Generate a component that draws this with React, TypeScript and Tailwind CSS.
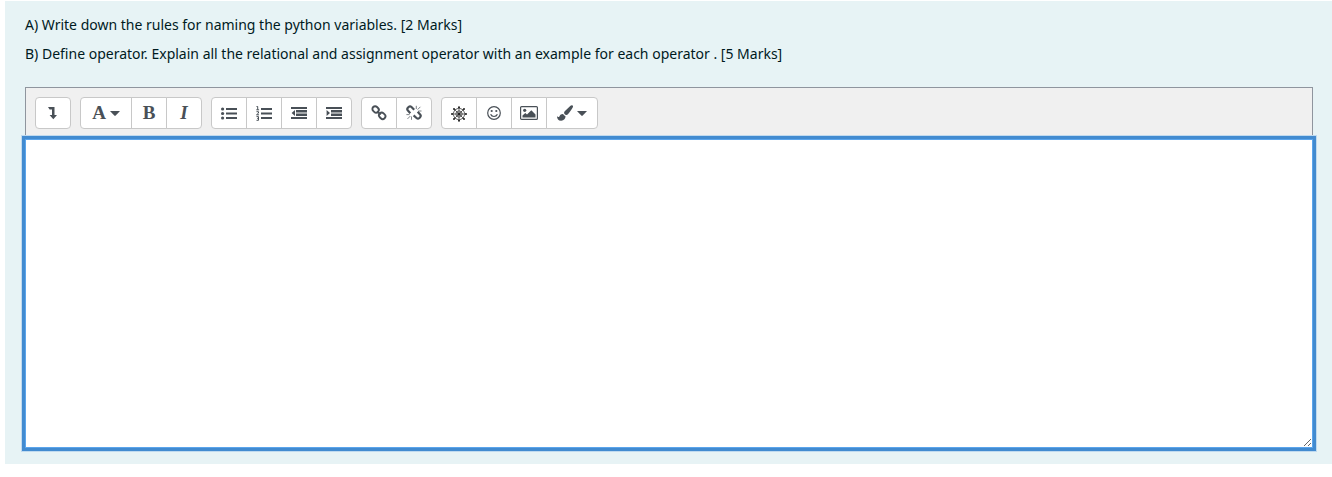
import React, { useState } from 'react';

type IconProps = { children: React.ReactNode; className?: string };

const Icon = ({ children, className = 'size-4' }: IconProps) => (
    <svg viewBox="0 0 16 16" className={`${className} shrink-0`} fill="currentColor" aria-hidden="true">
        {children}
    </svg>
);

const Caret = () => (
    <svg viewBox="0 0 10 5" className="w-[10px] h-[5px] shrink-0" fill="currentColor" aria-hidden="true">
        <path d="M0 0h10L5.500 4.800h-1z" />
    </svg>
);

const ToggleIcon = () => (
    <Icon>
        <path d="M3 2h6.500v8H12l-3.700 4.300L4.600 10H7V4.500H4.600z" />
    </Icon>
);

const BulletsIcon = () => (
    <Icon>
        <circle cx="1.600" cy="4" r="1.600" />
        <circle cx="1.600" cy="8.500" r="1.600" />
        <circle cx="1.600" cy="13" r="1.600" />
        <path d="M5 3h11.500v2H5zM5 7.500h11.500v2H5zM5 12h11.500v2H5z" />
    </Icon>
);

const NumbersIcon = () => (
    <Icon>
        <path d="M5 3h11.500v2H5zM5 7.500h11.500v2H5zM5 12h11.500v2H5z" />
        <path
            d="M.5 1.500h1.200v3.300M.3 4.800h2.800M.5 6.700h2v1.400l-2 1.700h2.500M.5 11.600h2v3.700h-2M1.200 13.400h1.200"
            fill="none"
            stroke="currentColor"
            strokeWidth="1"
        />
    </Icon>
);

const OutdentIcon = () => (
    <Icon>
        <path d="M0 2h16v2H0zM5 5h11v2.500H5zM5 8.500h11V11H5zM0 12h16v2H0zM4 5v6L.6 8z" />
    </Icon>
);

const IndentIcon = () => (
    <Icon>
        <path d="M0 2h16v2H0zM5 5h11v2.500H5zM5 8.500h11V11H5zM0 12h16v2H0zM.6 5v6L4 8z" />
    </Icon>
);

const LinkIcon = () => (
    <Icon>
        <g fill="none" stroke="currentColor" strokeWidth="1.900">
            <rect x="1.200" y="1.700" width="6.800" height="5.400" rx="2.700" transform="rotate(45 4.600 4.400)" />
            <rect x="7.800" y="8.100" width="6.800" height="5.400" rx="2.700" transform="rotate(45 11.200 10.800)" />
            <path d="M5.800 6.600l4.200 2.600" />
        </g>
    </Icon>
);

const UnlinkIcon = () => (
    <Icon>
        <g fill="none" stroke="currentColor" strokeWidth="2.200">
            <path d="M4.300 8.200L1.900 5.600a2.200 2.200 0 0 1 0-2.900l.7-.7a2.200 2.200 0 0 1 2.900 0l2.700 2.800" />
            <path d="M11.700 6.800l2.400 2.600a2.200 2.200 0 0 1 0 2.900l-.7.7a2.200 2.200 0 0 1-2.900 0L7.600 10.400" />
        </g>
        <path
            d="M10.300 4V.8M11.600 4.600l2.800-2.800M12.300 6h3.200M5.500 11.500v3.300M4.400 11l-2.900 2.900M3.600 9.600H.4"
            fill="none"
            stroke="currentColor"
            strokeWidth="0.700"
        />
    </Icon>
);

const WebIcon = () => (
    <Icon className="size-4 mt-[2px] text-[#222]">
        <g fill="none" stroke="currentColor" strokeWidth="0.700">
            <path d="M8 1v14M1 8h14M3 3l10 10M13 3L3 13" />
            <path d="M8 2l4.200 1.800L14 8l-1.800 4.200L8 14l-4.200-1.800L2 8l1.800-4.200z" />
            <path d="M8 4.800l2.300.9L11.200 8l-.9 2.300-2.300.9-2.300-.9L4.800 8l.9-2.300z" />
        </g>
        <circle cx="8" cy="8" r="1.600" />
        <circle cx="8" cy="1.200" r="1" />
        <circle cx="8" cy="14.800" r="1" />
        <circle cx="1" cy="8" r="1" />
        <circle cx="15" cy="8" r="1" />
        <circle cx="3" cy="3" r="1" />
        <circle cx="13" cy="3" r="1" />
        <circle cx="3" cy="13" r="1" />
        <circle cx="13" cy="13" r="1" />
    </Icon>
);

const SmileIcon = () => (
    <Icon>
        <circle cx="8" cy="8" r="6.300" fill="none" stroke="currentColor" strokeWidth="1.200" />
        <circle cx="5.700" cy="6" r="1.100" />
        <circle cx="10.300" cy="6" r="1.100" />
        <path d="M4.600 9.300c1.200 2.900 5.600 2.900 6.800 0" fill="none" stroke="currentColor" strokeWidth="1.200" />
    </Icon>
);

const ImageIcon = () => (
    <svg viewBox="0 0 18 14" className="w-[18px] h-[14px] shrink-0" fill="currentColor" aria-hidden="true">
        <rect x="0.600" y="0.600" width="16.800" height="12.800" rx="1" fill="none" stroke="currentColor" strokeWidth="1.200" />
        <circle cx="4.700" cy="4.300" r="1.600" />
        <path d="M2.500 11.500V9.500l2.800-2.600L7 8.500l4.300-4.300 4.200 4.200v3.100z" />
    </svg>
);

const BrushIcon = () => (
    <Icon>
        <path d="M14.700.2c1 0 1.600.9 1.200 1.900-.6 1.500-3.400 5.700-4.700 6.900-.7.600-1.400 1-2.100.9-1-.1-1.900-1-2-1.900-.1-.8.300-1.400.9-2L13.500.7c.4-.3.800-.5 1.200-.5z" />
        <path d="M6.200 9c.4 1.100 1.200 1.800 2.300 2.100.1 2.800-1.600 4.600-4.300 4.600C1.200 15.700.1 13.700 0 11.200c.4.300 1.300.9 1.700.9.500 0 .6-.5.800-.9C3.200 9.600 4.400 8.900 6.200 9z" />
    </Icon>
);

const Letter = ({ children }: { children: React.ReactNode }) => (
    <span className="font-['Liberation_Serif',serif] text-[19px] leading-5 font-bold">{children}</span>
);

type Tool = { label: string; icon: React.ReactNode; menu?: boolean };

const groups: Tool[][] = [
    [{ label: 'Show more buttons', icon: <ToggleIcon /> }],
    [
        { label: 'Paragraph styles', icon: <Letter>A</Letter>, menu: true },
        { label: 'Bold', icon: <Letter>B</Letter> },
        { label: 'Italic', icon: <Letter><i>I</i></Letter> },
    ],
    [
        { label: 'Unordered list', icon: <BulletsIcon /> },
        { label: 'Ordered list', icon: <NumbersIcon /> },
        { label: 'Outdent', icon: <OutdentIcon /> },
        { label: 'Indent', icon: <IndentIcon /> },
    ],
    [
        { label: 'Link', icon: <LinkIcon /> },
        { label: 'Unlink', icon: <UnlinkIcon /> },
    ],
    [
        { label: 'Insert diagram', icon: <WebIcon /> },
        { label: 'Emoji picker', icon: <SmileIcon /> },
        { label: 'Insert image', icon: <ImageIcon /> },
        { label: 'Drawing', icon: <BrushIcon />, menu: true },
    ],
];

const ToolGroup = ({ tools }: { tools: Tool[] }) => (
    <div className="flex -space-x-px">
        {tools.map((tool) => (
            <button
                key={tool.label}
                type="button"
                title={tool.label}
                aria-label={tool.label}
                className={`${tool.menu ? 'w-[52px]' : 'w-9'} h-8 flex items-center justify-center gap-1 bg-white border border-[#c8c8c8] first:rounded-l last:rounded-r text-[#495057] hover:bg-gray-100`}
            >
                {tool.icon}
                {tool.menu && <Caret />}
            </button>
        ))}
    </div>
);

export default function App() {
    const [answer, setAnswer] = useState('');

    return (
        <main className="bg-white pt-px pl-[5px] font-['Noto_Sans',sans-serif] text-[#001a1e]">
            <section className="bg-[#e7f3f5] pt-[13px] pb-4 pl-5 pr-[19px]">
                <div className="text-[14px] leading-[21px]">
                    <p className="mb-2">A) Write down the rules for naming the python variables. [2 Marks]</p>
                    <p>
                        B) Define operator. Explain all the relational and assignment operator with an example for each
                        operator . [5 Marks]
                    </p>
                </div>

                <div className="mt-[23px]">
                    <div
                        role="toolbar"
                        aria-label="Editor"
                        className="min-h-[52px] flex items-start flex-wrap gap-[9px] pt-[9px] px-[9px] bg-[#f0f0f0] border border-b-0 border-[#8f959e]"
                    >
                        {groups.map((tools) => (
                            <ToolGroup key={tools[0].label} tools={tools} />
                        ))}
                    </div>
                    <textarea
                        aria-label="Answer text"
                        value={answer}
                        onChange={(e) => setAnswer(e.target.value)}
                        className="relative block w-full h-[309px] p-2 bg-white border border-[#5ba5ec] text-[14px] resize-y outline-none shadow-[0_0_0_3px_#428bd0,0_0_0_4px_#c0daef]"
                    />
                </div>
            </section>
        </main>
    );
}
